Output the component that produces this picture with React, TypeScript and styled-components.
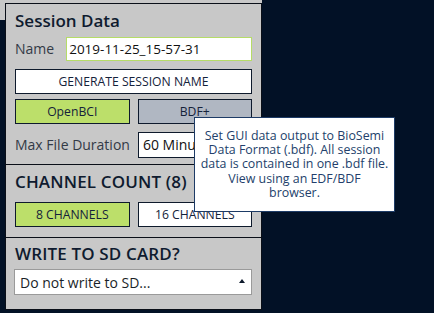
import React from 'react';
import styled, { createGlobalStyle } from 'styled-components';

const GlobalStyle = createGlobalStyle`
    html, body {
        margin: 0;
        padding: 0;
        background: #021126;
        font-family: "Open Sans", "Liberation Sans", sans-serif;
    }
`

const Page = styled.div`
    width: 434px;
    height: 313px;
    position: relative;
    overflow: hidden;
    background: #021126;
`

const TopStrip = styled.div`
    width: 262px;
    height: 3px;
    background: #c8c8c8;
`

const Body = styled.div`
    display: flex;
    align-items: flex-start;
`

const EdgeStub = styled.div`
    width: 5px;
    height: 17px;
    background: #c8c8c8;
`

const Panel = styled.div`
    width: 255px;
    height: 305px;
    background: #c8c8c8;
    border: 1px solid #0a0f18;
    display: flex;
    flex-direction: column;
`

const Section = styled.div<{ $height: number; $last?: boolean }>`
    height: ${p => p.$height}px;
    padding: 0 9px;
    border-bottom: ${p => p.$last ? 'none' : '1px solid #0a0f18'};
    display: flex;
    flex-direction: column;
    flex-shrink: 0;
`

const Title = styled.div<{ $top: number; $caps?: boolean }>`
    margin-top: ${p => p.$top}px;
    height: 24px;
    line-height: 24px;
    font-size: 17px;
    font-weight: 600;
    color: #0f1b2f;
    letter-spacing: ${p => p.$caps ? '0.15px' : '0'};
`

const Row = styled.div<{ $top: number }>`
    margin-top: ${p => p.$top}px;
    display: flex;
    align-items: center;
    gap: 8px;
    height: 25px;
`

const Label = styled.span`
    font-size: 14px;
    color: #333a46;
    white-space: nowrap;
`

const TextBox = styled.div`
    margin-left: 4px;
    flex: 1;
    height: 24px;
    box-sizing: border-box;
    background: #ffffff;
    border: 1px solid #b6dc68;
    font-size: 13.5px;
    line-height: 22px;
    padding-left: 2px;
    color: #111;
`

const Button = styled.div<{ $bg: string }>`
    flex: 1;
    height: 25px;
    box-sizing: border-box;
    background: ${p => p.$bg};
    border: 1px solid #0e1a2c;
    font-size: 12.2px;
    line-height: 23px;
    text-align: center;
    color: #14223a;
    white-space: nowrap;
    overflow: hidden;
`

const SelectBox = styled.div`
    flex: 1;
    height: 26px;
    box-sizing: border-box;
    background: #ffffff;
    border: 1px solid #0e1a2c;
    font-size: 14px;
    line-height: 24px;
    padding-left: 4px;
    color: #111;
    white-space: nowrap;
    overflow: hidden;
`

const Dropdown = styled.div`
    margin-top: 3px;
    width: 238px;
    margin-left: -1px;
    height: 26px;
    box-sizing: border-box;
    background: #ffffff;
    border: 1px solid #9a9a9a;
    display: flex;
    align-items: center;
    justify-content: space-between;
    padding: 0 6px 0 5px;
    font-size: 14px;
    color: #1a1f28;
`

const Caret = styled.span`
    width: 0;
    height: 0;
    border-left: 3px solid transparent;
    border-right: 3px solid transparent;
    border-bottom: 4px solid #0e1a2c;
    margin-top: -2px;
`

const Tooltip = styled.div`
    position: absolute;
    left: 194px;
    top: 117px;
    width: 201px;
    height: 95px;
    box-sizing: border-box;
    background: #ffffff;
    border: 1px solid #1d3b66;
    padding-top: 11px;
    text-align: center;
    font-size: 12.4px;
    line-height: 14.2px;
    color: #233f6b;
    white-space: nowrap;
`

export default function App() {
    return (
        <Page>
            <GlobalStyle />
            <TopStrip />
            <Body>
                <EdgeStub />
                <Panel>
                    <Section $height={160}>
                        <Title $top={5}>Session Data</Title>
                        <Row $top={3}>
                            <Label>Name</Label>
                            <TextBox>2019-11-25_15-57-31</TextBox>
                        </Row>
                        <Row $top={8}>
                            <Button $bg="#ffffff">GENERATE SESSION NAME</Button>
                        </Row>
                        <Row $top={5}>
                            <Button $bg="#bcdf6a">OpenBCI</Button>
                            <Button $bg="#b0b7c2">BDF+</Button>
                        </Row>
                        <Row $top={8}>
                            <Label>Max File Duration</Label>
                            <SelectBox>60 Minu</SelectBox>
                        </Row>
                    </Section>
                    <Section $height={72}>
                        <Title $top={5} $caps>CHANNEL COUNT (8)</Title>
                        <Row $top={8}>
                            <Button $bg="#bcdf6a">8 CHANNELS</Button>
                            <Button $bg="#ffffff">16 CHANNELS</Button>
                        </Row>
                    </Section>
                    <Section $height={70} $last>
                        <Title $top={4} $caps>WRITE TO SD CARD?</Title>
                        <Dropdown>
                            <span>Do not write to SD...</span>
                            <Caret />
                        </Dropdown>
                    </Section>
                </Panel>
            </Body>
            <Tooltip>
                Set GUI data output to BioSemi<br />
                Data Format (.bdf). All session<br />
                data is contained in one .bdf file.<br />
                View using an EDF/BDF<br />
                browser.
            </Tooltip>
        </Page>
    );
}
